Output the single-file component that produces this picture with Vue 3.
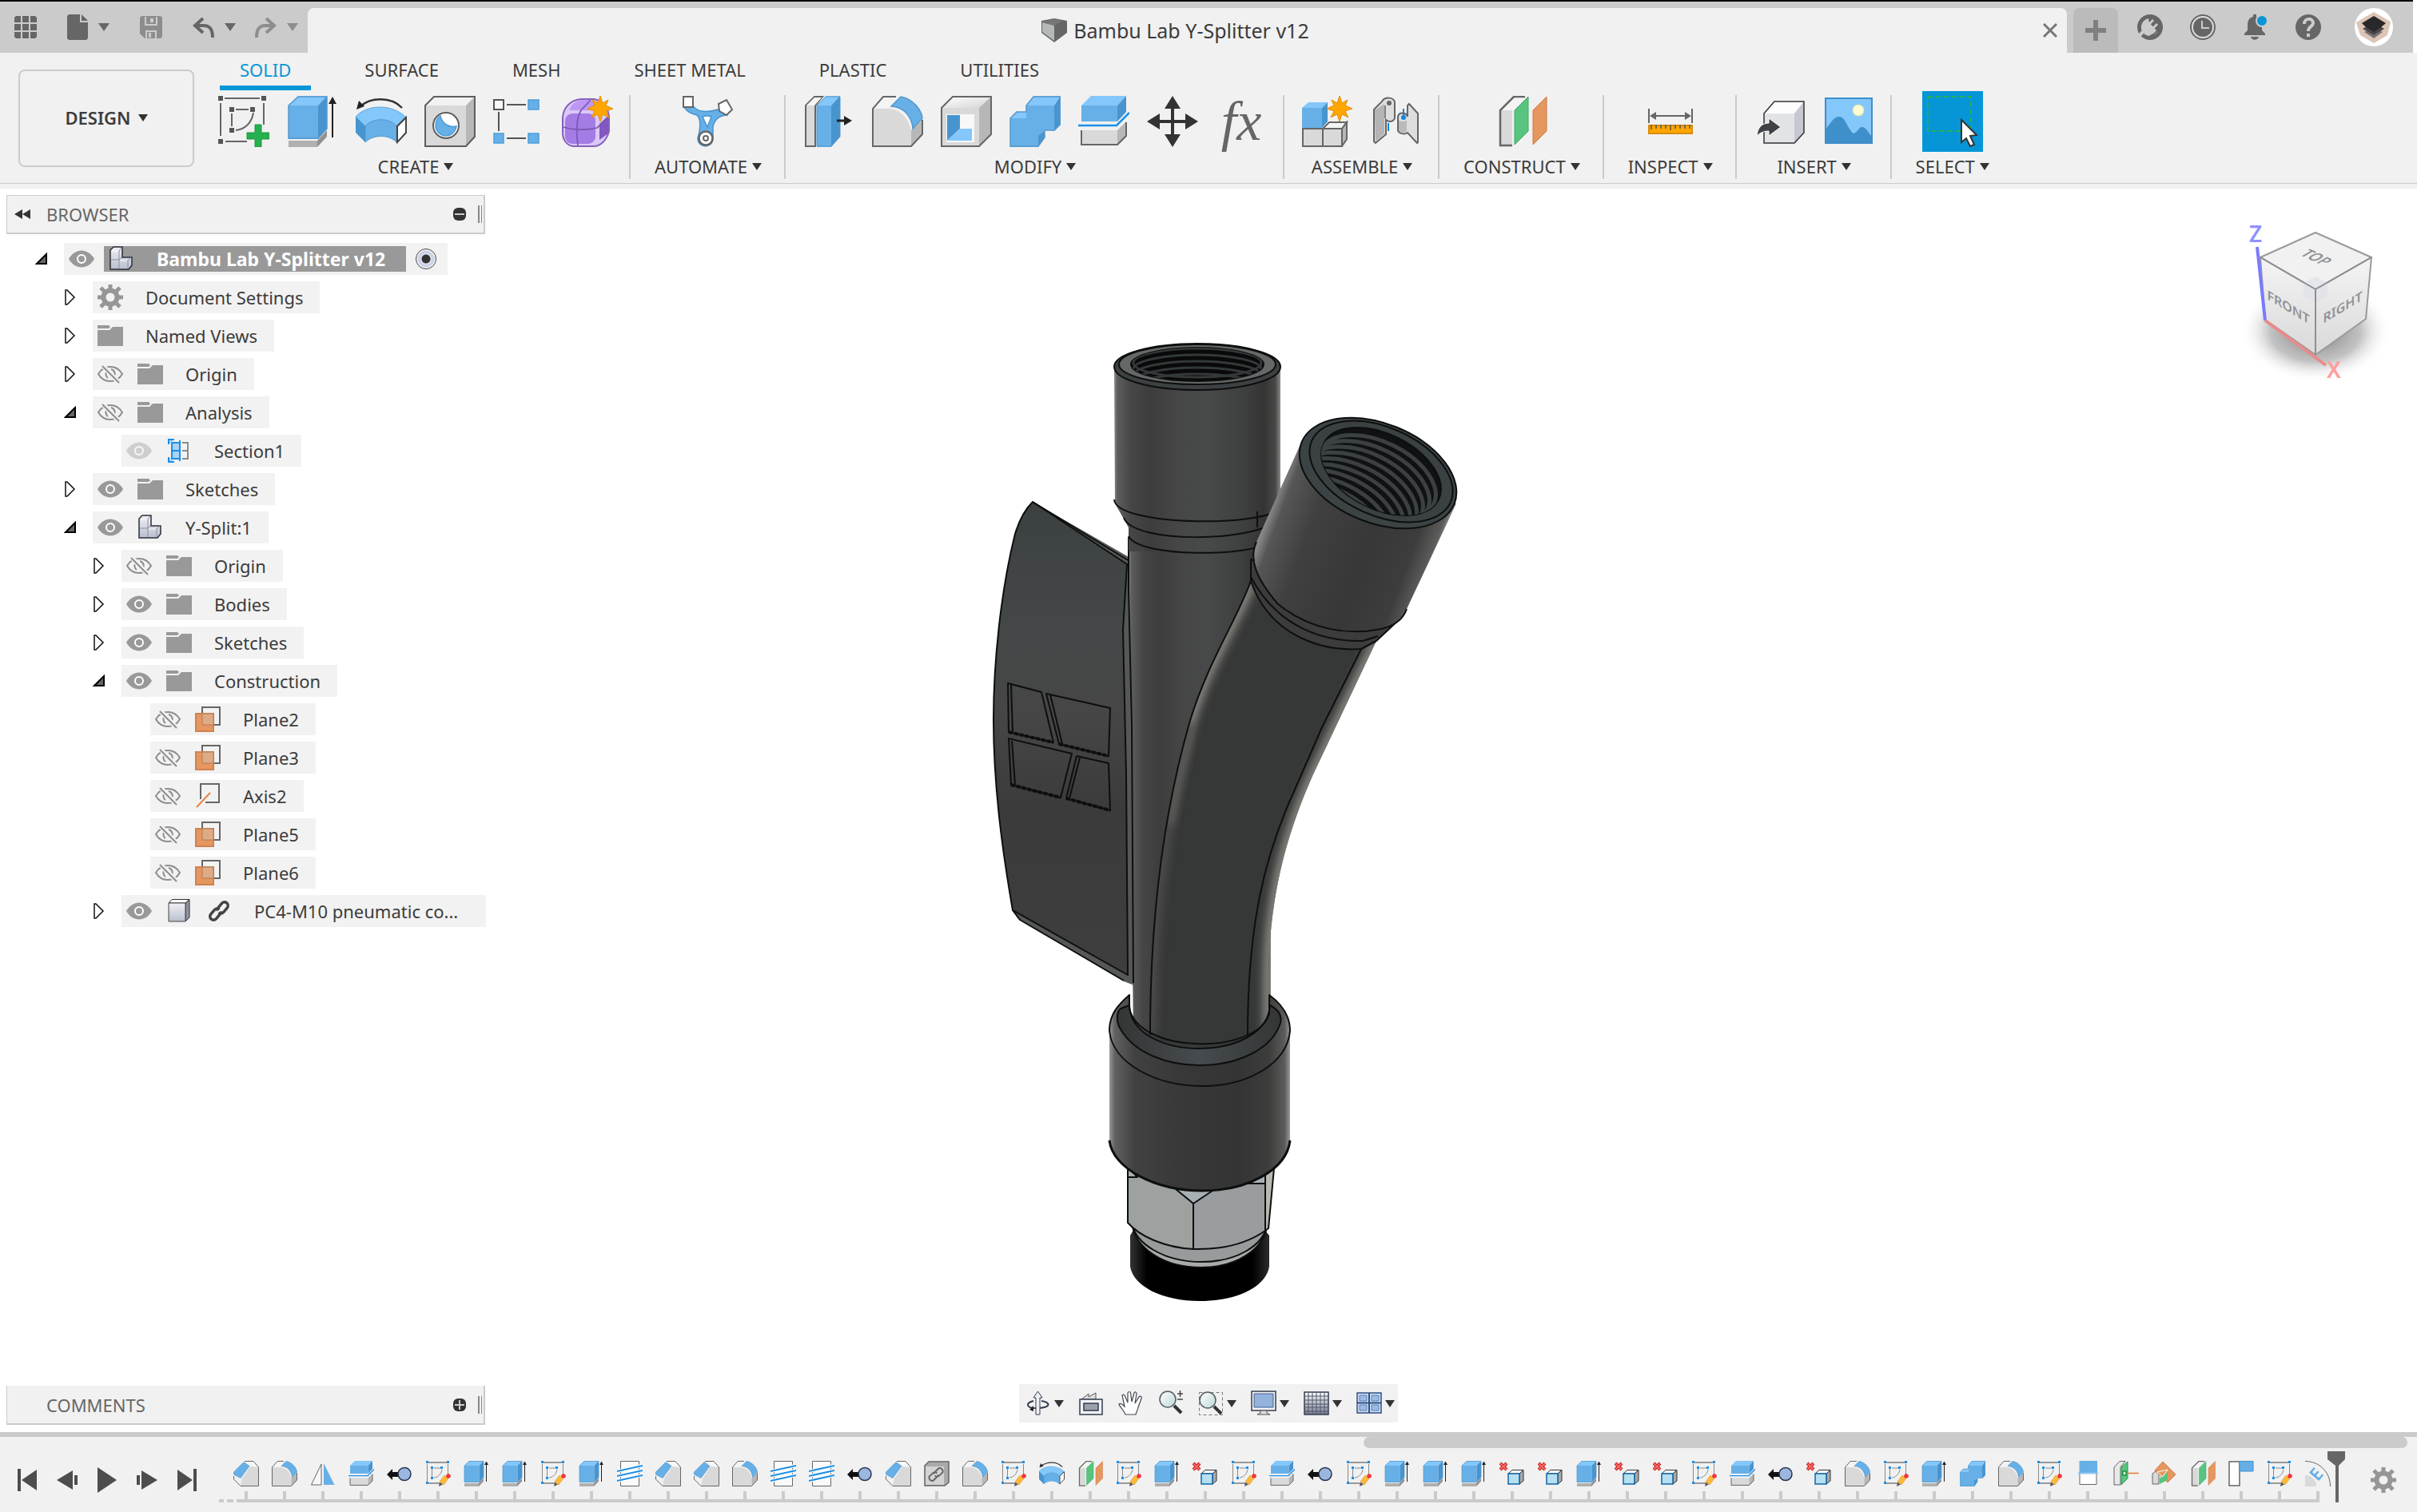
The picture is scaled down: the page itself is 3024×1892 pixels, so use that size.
<template>
  <!-- Shared icon shapes -->
  <svg class="sprite" aria-hidden="true">
    <defs>
      <linearGradient id="g-top" x1="0" y1="0" x2="1" y2="1">
        <stop offset="0" stop-color="#fff" /><stop offset="1" stop-color="#d4d4d4" />
      </linearGradient>
      <linearGradient id="g-metal" x1="0" y1="0" x2="0" y2="1">
        <stop offset="0" stop-color="#f0f1f5" /><stop offset="1" stop-color="#b9bfcf" />
      </linearGradient>
      <linearGradient id="g-lens" x1="0" y1="0" x2="1" y2="1">
        <stop offset="0" stop-color="#fff" /><stop offset="1" stop-color="#bcd9d6" />
      </linearGradient>
      <linearGradient id="g-fade" x1="0" y1="0" x2="0" y2="1">
        <stop offset="0" stop-color="#fff" /><stop offset="1" stop-color="#777c92" />
      </linearGradient>
    </defs>

    <symbol id="i-sketch" viewBox="0 0 64 64">
      <g fill="none" stroke="#666" stroke-width="2">
        <path d="M8 3H52M3 9V50M57 9V36M9 57H36M22 17H38M17 22V38M44 21C42 34 33 42 22 43" />
      </g>
      <path fill="#555" d="M0 0h6v6H0zM54 0h6v6h-6zM0 54h6v6H0zM14 14h6v6h-6zM40 14h6v6h-6zM14 40h6v6h-6z" />
      <path fill="#26b050" stroke="#1d9641" d="M46 36h8v10h10v8H54v10h-8V54H36v-8h10z" />
    </symbol>
    <symbol id="i-extrude" viewBox="0 0 64 64">
      <path fill="#b0b0b0" d="M2 56H38V64H2z" /><path fill="#949090" d="M38 56L50 43V51L38 64z" />
      <path fill="#67b0e7" d="M2 12H39V54H2z" /><path fill="#84c7fa" d="M2 12L14 0H50L39 12z" />
      <path fill="#4794cf" d="M39 12L50 0V41L39 54z" />
      <path fill="none" stroke="#5498cd" stroke-width="1.5" d="M2 12L14 1H50V41L39 53H2z" />
      <path stroke="#222" stroke-width="2" d="M57 8V52" /><path fill="#222" d="M57 1L62 10H52z" />
    </symbol>
    <symbol id="i-revolve" viewBox="0 0 64 64">
      <path fill="#84c7fa" stroke="#5ca6df" d="M0 26C14 10 46 10 62 26L51 38C44 29 20 29 12 38z" />
      <path fill="#67b0e7" stroke="#5498cd" d="M12 38C20 27 44 27 51 38V58C42 48 22 48 12 58z" />
      <path fill="#4794cf" d="M0 26L12 38V58L0 46z" />
      <path fill="#fff" stroke="#444" stroke-width="2" d="M52 38L63 27V46L52 58z" />
      <path fill="none" stroke="#333" stroke-width="2.5" d="M6 13C18 2 44 0 58 15" />
      <path fill="#222" d="M1 17L4 6L11 13z" />
    </symbol>
    <symbol id="i-hole" viewBox="0 0 64 64">
      <path fill="#d9d9d9" d="M1 12H52V63H1z" /><path fill="#f2f2f2" d="M1 12L12 1H63L52 12z" />
      <path fill="#b7b7b7" d="M52 12L63 1V51L52 63z" />
      <path fill="none" stroke="#5e5e5e" stroke-width="2" d="M1 12L12 1H63V51L52 63H1z" />
      <circle cx="27" cy="37" r="16" fill="#fff" stroke="#5e5e5e" stroke-width="2" />
      <path fill="#67b0e7" stroke="#4e9dd8" stroke-width="1.5" d="M20 25C22 35 31 40 40 38C39 45 33 50 27 50C20 50 14 44 14 37C14 31 17 27 20 25z" />
    </symbol>
    <symbol id="i-pattern" viewBox="0 0 64 64">
      <path stroke="#555" stroke-width="2" d="M17 11H41M7 20V44M17 53H41" />
      <path fill="#f8f8f8" stroke="#555" stroke-width="2" d="M1 5H13V17H1z" />
      <path fill="#67b0e7" stroke="#4e9dd8" stroke-width="1.5" d="M44 5H57V17H44zM44 47H57V59H44zM1 47H13V59H1z" />
    </symbol>
    <symbol id="i-form" viewBox="0 0 64 64">
      <path fill="#dcc8f7" stroke="#8661bd" stroke-width="2" d="M1 27C2 14 11 5 24 4H40C52 6 59 16 59 28V44C56 56 48 63 40 63H14C6 62 1 55 1 46z" />
      <path fill="#be97f5" d="M9 18C12 9 21 4 32 5L46 8L36 18z" />
      <rect x="4" y="22" width="38" height="38" rx="9" fill="#a47ce5" />
      <path fill="#8257c0" d="M47 35L58 25V47L47 55z" />
      <path fill="none" stroke="#7d57b4" stroke-width="1.8" d="M2 39C14 43 32 43 44 40L59 26M20 62C18 46 18 28 24 18L36 5" />
      <use href="#star" x="32" y="0" />
    </symbol>
    <symbol id="star" viewBox="0 0 32 32" width="32" height="32">
      <path fill="#ffa700" stroke="#e38e00" d="M16 0L19 9L26 5L23 12L32 16L23 19L27 27L19 23L16 32L13 23L5 27L9 19L0 16L9 12L6 5L13 9z" />
    </symbol>
    <symbol id="i-automate" viewBox="0 0 64 64">
      <path fill="#67b0e7" stroke="#4794cf" stroke-width="1.5" d="M2 14L13 12C17 19 28 22 44 17L55 24C46 25 41 28 38 38L38 54C37 66 19 66 19 53C22 42 24 30 18 24C11 22 5 20 2 14z" />
      <path fill="#fff" stroke="#4794cf" stroke-width="1.5" d="M25 26Q31 24 36 26L31 39z" />
      <path fill="#fff" stroke="#666" stroke-width="2" d="M1 1H13V14H1zM45 10L55 5L62 17L55 24L46 19z" />
      <circle cx="29" cy="53" r="8.500" fill="#fff" stroke="#666" stroke-width="2.500" />
      <circle cx="29" cy="53" r="3" fill="#fff" stroke="#666" stroke-width="2" />
    </symbol>
    <symbol id="i-press" viewBox="0 0 64 64">
      <path fill="#d9d9d9" stroke="#666" stroke-width="2" d="M15 63H3V12L14 1H24L15 12z" />
      <path fill="#f4f4f4" d="M4 12L14 2H23L14 12z" />
      <path fill="#67b0e7" d="M17 12H35V64H17z" /><path fill="#84c7fa" d="M17 12L28 0H46L35 12z" />
      <path fill="#4794cf" d="M35 12L46 0V51L35 64z" />
      <path fill="none" stroke="#5498cd" d="M17 12L28 1H46V51L35 63H17z" />
      <path stroke="#222" stroke-width="3" d="M42 31H54" /><path fill="#222" d="M51 25L61 31L51 37z" />
    </symbol>
    <symbol id="i-fillet" viewBox="0 0 64 64">
      <path fill="#f4f4f4" d="M1 16L14 1H34L24 14z" />
      <path fill="#d9d9d9" d="M1 16H22C38 18 48 32 49 46V63H1z" />
      <path fill="#b7b7b7" d="M49 43L63 30V48L49 63z" />
      <path fill="none" stroke="#666" stroke-width="2" d="M30 1H14L1 16V63H49L63 48V30" />
      <path fill="#67b0e7" stroke="#5498cd" stroke-width="1.5" d="M24 13L36 1C52 4 62 18 63 28L51 41C50 26 40 14 24 13z" />
    </symbol>
    <symbol id="i-shell" viewBox="0 0 64 64">
      <path fill="#d9d9d9" d="M1 15H48V63H1z" /><path fill="url(#g-top)" d="M1 15L15 1H63L48 15z" />
      <path fill="#b7b7b7" d="M48 15L63 1V48L48 63z" />
      <path fill="none" stroke="#666" stroke-width="2" d="M1 15L15 1H63V48L48 63H1z" />
      <path fill="#f8f8f8" d="M7 23H42V58H7z" /><path fill="#4794cf" d="M8 24H24V41L8 56z" />
      <path fill="#84c7fa" d="M8 56L24 41H39V56z" />
    </symbol>
    <symbol id="i-combine" viewBox="0 0 64 64">
      <path fill="#67b0e7" d="M1 28H21V12H56V43H43V51L36 64H1z" />
      <path fill="#84c7fa" d="M21 12L30 0H64L56 12zM1 28L9 20H21V28z" />
      <path fill="#4794cf" d="M56 12L64 0V36L56 44zM36 50L44 44V52L36 64z" />
      <path fill="none" stroke="#5498cd" stroke-width="1.5" d="M1 28L9 20H21V12L30 1H63V36L56 43H44V52L36 63H1z" />
    </symbol>
    <symbol id="i-split" viewBox="0 0 64 64">
      <path fill="#67b0e7" d="M4 12H49V32H4z" /><path fill="#84c7fa" d="M4 12L16 0H60L49 12z" />
      <path fill="#4794cf" d="M49 12L60 0V20L49 32z" />
      <path fill="none" stroke="#1a8fe8" stroke-width="2.5" d="M0 37H48L64 21" />
      <path fill="#d9d9d9" d="M4 43H49V61H4z" /><path fill="#b7b7b7" d="M49 43L60 32V50L49 61z" />
      <path fill="none" stroke="#666" stroke-width="2" d="M4 43V61H49L60 50V33" />
    </symbol>
    <symbol id="i-move" viewBox="0 0 64 64">
      <path stroke="#333" stroke-width="4" d="M32 10V54M10 32H54" />
      <path fill="#333" d="M32 0L42 16H22zM32 64L42 48H22zM0 32L16 22V42zM64 32L48 22V42z" />
    </symbol>
    <symbol id="i-component" viewBox="0 0 64 64">
      <path fill="#d9d9d9" stroke="#666" stroke-width="2" d="M1 41H26V63H1zM26 41H50V63H26z" />
      <path fill="#f4f4f4" stroke="#666" stroke-width="2" d="M26 41L34 33H56L50 41z" />
      <path fill="#b7b7b7" stroke="#666" stroke-width="2" d="M50 41L56 33V54L50 63z" />
      <path fill="#67b0e7" d="M0 15H25V40H0z" /><path fill="#84c7fa" d="M0 15L8 8H32L25 15z" />
      <path fill="#4794cf" d="M25 15L32 8V32L25 40z" />
      <use href="#star" x="31" y="0" />
    </symbol>
    <symbol id="i-joint" viewBox="0 0 64 64">
      <path fill="#dedede" stroke="#666" stroke-width="2" d="M4 17L14 7C17 1 29 1 30 8V28C28 33 22 33 19 30V48L6 59L4 57z" />
      <path fill="#b4b4b4" d="M5 18L17 10V47L6 57z" />
      <path fill="none" stroke="#666" stroke-width="1.500" d="M18 28V12" />
      <circle cx="23" cy="9" r="3" fill="#666" />
      <path fill="#dedede" stroke="#666" stroke-width="2" d="M58 59L46 46C42 49 35 47 34 43V26C35 20 44 20 46 26V12L48 10L59 22V58z" />
      <path fill="#bababa" d="M35 30C38 33 43 33 45 30V44C42 47 36 46 35 42z" />
      <path stroke="#0f87df" stroke-width="2" d="M22 34V44M41 16V28" /><circle cx="41" cy="27" r="3" fill="#0f87df" />
    </symbol>
    <symbol id="i-planes" viewBox="0 0 64 64">
      <path fill="#d9d9d9" d="M5 18H20V62H5z" /><path fill="#f4f4f4" d="M5 18L22 1H37L20 18z" />
      <path fill="none" stroke="#666" stroke-width="2.5" d="M36 1H22L5 18V62H20" />
      <path fill="#58c47e" stroke="#35ad62" d="M23 18L40 1V44L23 61z" />
      <path fill="#e6965f" stroke="#cf7b42" d="M46 18L63 1V44L46 61z" />
    </symbol>
    <symbol id="i-inspect" viewBox="0 0 64 64">
      <path stroke="#666" stroke-width="2" d="M5 16V34M59 16V34M10 25H54" />
      <path fill="#666" d="M6 25L14 20V30zM58 25L50 20V30z" />
      <path fill="#ffa700" stroke="#d98c00" stroke-width="2" d="M5 37H59V47H5z" />
      <path stroke="#555" stroke-width="1.500" d="M8 36v6M14 36v5M20 36v5M26 36v5M32 36v7M38 36v5M44 36v5M50 36v5M56 36v5" />
    </symbol>
    <symbol id="i-insert" viewBox="0 0 64 64">
      <path fill="#e2e3e7" d="M12 22H50V59H12z" /><path fill="#fdfdfd" d="M12 22L25 7H62L50 22z" />
      <path fill="#c6c8d1" d="M50 22L62 7V46L50 59z" />
      <path fill="none" stroke="#333" stroke-width="1.5" d="M12 22L25 7H62V46L50 59H12z" />
      <path fill="#3f4147" stroke="#fff" d="M3 50C4 40 9 34 18 34V28L33 39L18 50V44C12 44 7 46 3 50z" />
    </symbol>
    <symbol id="i-image" viewBox="0 0 64 64">
      <path fill="#84c7fa" stroke="#3f8fcb" stroke-width="2" d="M3 3H61V59H3z" />
      <circle cx="44" cy="18" r="7" fill="#fffbd0" stroke="#d6e5b5" />
      <path fill="#3f8fcb" d="M3 42C9 35 13 26 20 26C28 26 31 42 38 47C43 46 44 39 49 39C54 39 57 47 61 51V60H3z" />
    </symbol>
    <symbol id="i-select" viewBox="0 0 76 76">
      <rect x="7" y="7" width="54" height="43" fill="none" stroke="#26b050" stroke-width="2" stroke-dasharray="6 4" />
      <path fill="#fff" stroke="#333" stroke-width="2" d="M49 36V64L55 59L60 69L65 67L60 56L68 55z" />
    </symbol>

    <!-- Timeline only -->
    <symbol id="t-chamfer" viewBox="0 0 64 64">
      <path fill="#f7f7f7" d="M20 1H50L63 16L42 13L26 42z" /><path fill="#d9d9d9" d="M42 14L63 16V63H18L22 44z" />
      <path fill="none" stroke="#666" stroke-width="2" d="M28 1H50L63 16V63H18L1 46V38" />
      <path fill="#67b0e7" stroke="#5498cd" stroke-width="1.5" d="M26 3L40 13L18 43L1 34V28z" />
    </symbol>
    <symbol id="t-mirror" viewBox="0 0 64 64">
      <path fill="#f7f7f7" stroke="#666" stroke-width="2" d="M28 8V60H3z" /><path fill="#67b0e7" d="M34 6L61 60H34z" />
    </symbol>
    <symbol id="t-align" viewBox="0 0 32 32">
      <path fill="#111" d="M0 17L7 10V14H14V20H7V24z" /><circle cx="22" cy="16.500" r="8" fill="#9bb7df" stroke="#28324e" stroke-width="1.500" />
    </symbol>
    <symbol id="t-sketch" viewBox="0 0 32 32">
      <path fill="none" stroke="#999" stroke-width="2" d="M4 2H27M4 28H20" /><path fill="none" stroke="#888" d="M2.500 4V26M28.500 4V20M8.500 10V20M11 9H19M21 11C20 17 15 21 11 21" />
      <path fill="#1a8fe8" d="M1 0h3v3H1zM27 0h3v3h-3zM1 26h3v3H1zM7 7h3v3H7zM19 7h3v3h-3zM7 20h3v3H7z" />
      <path fill="#fbb93b" stroke="#d99a2a" stroke-width=".6" d="M18 26L24 18L29 22L23 30z" />
      <circle cx="29" cy="19" r="2.800" fill="#f0353b" /><path fill="#555" d="M18 27L22 29.500L17 32z" />
    </symbol>
    <symbol id="t-thread" viewBox="0 0 32 32">
      <path fill="#fafafa" stroke="#666" d="M4.500 .5H27.500V31.500H4.500z" />
      <path stroke="#fff" stroke-width="4" d="M1 13L31 6M1 19L31 12M1 25L31 18" />
      <path stroke="#1a8fe8" stroke-width="2" d="M0 13L32 6M0 19L32 12M0 25L32 18" />
    </symbol>
    <symbol id="t-link" viewBox="0 0 32 32">
      <path fill="#aaa" stroke="#666" stroke-width="1.500" d="M1 6L6 1H31V27L26 31H1z" /><path fill="#d4d4d4" d="M2 7H25V30H2z" />
      <g fill="none" stroke="#666" stroke-width="2" transform="rotate(-45 15 17)">
        <path d="M17 20H7A4 4 0 0 1 7 13H13A4 4 0 0 1 17 17M13 14H23A4 4 0 0 1 23 21H17A4 4 0 0 1 13 17" />
      </g>
    </symbol>
    <symbol id="t-delete" viewBox="0 0 32 32">
      <path fill="none" stroke="#b71c1c" stroke-width="4" d="M1 3L9 11M9 3L1 11" /><path fill="none" stroke="#ff6860" stroke-width="2" d="M1 3L9 11M9 3L1 11" />
      <path fill="#fff" stroke="#333" d="M11 16L16 11.500H30L25 16z" /><path fill="#aaa" stroke="#333" d="M25 16L30 11.500V25L25 29z" />
      <path fill="#b5e0f1" stroke="#1165a6" stroke-width="1.500" d="M11 16H25V29H11z" />
    </symbol>
    <symbol id="t-face" viewBox="0 0 32 32">
      <path fill="#fff" stroke="#666" d="M6 14H27V29.500H6z" /><path fill="#67b0e7" d="M5.500 0H28V15H5.500z" /><path stroke="#8fc5ef" stroke-width="2" d="M4 15.500H29" />
    </symbol>
    <symbol id="t-axis" viewBox="0 0 32 32">
      <path fill="#e8e8e8" stroke="#666" d="M1 8L8 .5H15L9 8V30H1z" /><path fill="#58c47e" stroke="#249b50" d="M10 8L18 1V22L10 30z" />
      <path stroke="#e07b39" stroke-width="1.500" d="M15 15.500H32" /><path fill="#d7ffe2" stroke="#159747" stroke-width="1.500" d="M12 13h4v5h-4z" />
    </symbol>
    <symbol id="t-diamond" viewBox="0 0 32 32">
      <path fill="#d9d9d9" stroke="#666" d="M1 16L9 10V29H1z" /><path fill="#e6965f" stroke="#cf7b42" d="M14 1L30 17L20 27L4 12z" />
      <path fill="#58c47e" d="M10 29V22L20 14V24z" /><path fill="none" stroke="#fff" d="M7 14L20 11L14 20z" />
    </symbol>
    <symbol id="t-flag" viewBox="0 0 32 32">
      <path fill="#fff" stroke="#666" stroke-width="1.500" d="M1 1H14V31H1z" /><path fill="#67b0e7" stroke="#3f8fcb" d="M14 .5H31V13H14z" />
    </symbol>

    <!-- Browser tree -->
    <symbol id="b-eye" viewBox="0 0 32 32">
      <path fill="#999" d="M0 16C8 2 24 2 32 16C24 30 8 30 0 16z" /><circle cx="16" cy="16" r="5" fill="#999" stroke="#fff" stroke-width="2" />
    </symbol>
    <symbol id="b-hidden" viewBox="0 0 32 32">
      <path fill="none" stroke="#8d8d8d" stroke-width="2" d="M1 16C8 4 24 4 31 16C24 28 8 28 1 16zM12 12A6 6 0 0 0 13 21M17 10A6 6 0 0 1 20 20M15 14A3 3 0 0 1 18 18" />
      <path stroke="#f2f2f2" stroke-width="6" d="M7 6L26 26" /><path stroke="#8d8d8d" stroke-width="2" d="M6 6L27 27" />
    </symbol>
    <symbol id="b-folder" viewBox="0 0 32 32">
      <path fill="#999" d="M0 3H14L16 5L14 7H0zM0 9H15L19 5H32V29H0z" />
    </symbol>
    <symbol id="b-gear" viewBox="0 0 32 32">
      <circle cx="16" cy="16" r="8.500" fill="none" stroke="#969696" stroke-width="6" />
      <path stroke="#969696" stroke-width="5" d="M16 0V6M16 26V32M0 16H6M26 16H32M4 4L9 9M23 23L28 28M28 4L23 9M4 28L9 23" />
    </symbol>
    <symbol id="b-component" viewBox="0 0 32 32">
      <path fill="url(#g-metal)" stroke="#2c2f38" stroke-width="1.500" d="M2 5L6 1H17V14H29V24L25 29H2z" />
      <path fill="none" stroke="#8b91a3" d="M13 6L16 2M13 6V28M3 17H13L16 14M24 18L28 14M24 18V28" />
      <path fill="none" stroke="#fff" d="M4 6H12M14 18H23" />
    </symbol>
    <symbol id="b-body" viewBox="0 0 32 32">
      <path fill="#fafafa" stroke="#333" d="M3 6L7 1.500H29L24 6z" /><path fill="#8e949f" stroke="#333" d="M24 6L29 1.500V24L24 29z" />
      <path fill="url(#g-metal)" stroke="#444" d="M3 6H24V29H3z" />
    </symbol>
    <symbol id="i-link" viewBox="0 0 32 32">
      <g fill="none" stroke="#444" stroke-width="4" transform="rotate(-50 16 16)">
        <path d="M18 20H5A5 5 0 0 1 5 10H13A5 5 0 0 1 18 15M14 12H27A5 5 0 0 1 27 22H19A5 5 0 0 1 14 17" />
      </g>
    </symbol>
    <symbol id="b-section" viewBox="0 0 32 32">
      <path fill="#a9d3f4" stroke="#1a8fe8" stroke-width="2" d="M7 6H17V26H7zM7 16H17M17 3V29M10 2H3V8M10 30H3V24" />
      <path fill="none" stroke="#8c8c8c" stroke-width="2" d="M20 6H27V26H20M20 16H27" />
    </symbol>
    <symbol id="b-plane" viewBox="0 0 32 32">
      <path fill="#f2f2f2" stroke="#666" stroke-width="2" d="M9 1H31V23H9z" />
      <path fill="#e6965f" stroke="#cf8350" stroke-width="2" d="M1 9H23V31H1z" /><path fill="#dfab86" stroke="#b37b55" d="M9 9H23V23H9z" />
    </symbol>
    <symbol id="b-axis" viewBox="0 0 32 32">
      <path fill="none" stroke="#666" stroke-width="2" d="M7 20V1H30V24H13" /><path stroke="#e8813c" stroke-width="2" d="M2 30L19 12" />
    </symbol>

    <!-- Navigation bar -->
    <symbol id="n-orbit" viewBox="0 0 32 32">
      <path fill="none" stroke="#333b4d" stroke-width="2" d="M10 13C-2 16 2 23 16 22C32 21 32 15 20 13" />
      <path fill="#eef0f4" stroke="#333b4d" d="M13 30V9H10L15.500 1L21 9H18V30z" /><path fill="#222" d="M5 24L10 19V26z" />
    </symbol>
    <symbol id="n-look" viewBox="0 0 32 32">
      <path fill="#ddd" stroke="#555" d="M4 11L13 4V8L22 3V11z" /><path fill="#f3f3f5" stroke="#333b4d" stroke-width="1.500" d="M2 11H30V30H2z" />
      <path fill="#9ba0ad" stroke="#333b4d" stroke-width="1.500" d="M7 16H25V25H7z" />
    </symbol>
    <symbol id="n-hand" viewBox="0 0 32 32">
      <path fill="#fff" stroke="#444a55" stroke-width="1.200" d="M9 30C7 24 2 21 1 17C3 15 6 18 8 20L5 6C7 4 8 6 9 8L12 15L12 3C13 1 15 1 15.500 3L17 14L20 3C21 1 23 2 23 4L21 16L26 8C28 6 30 8 29 10L25 21C24 26 22 28 22 30z" />
    </symbol>
    <symbol id="n-zoom" viewBox="0 0 32 32">
      <path stroke="#333" stroke-width="4" d="M20 19L29 28" /><circle cx="12" cy="11" r="10" fill="url(#g-lens)" stroke="#555b60" stroke-width="1.500" />
      <path stroke="#444" stroke-width="1.500" d="M24 4H31M27.500 0V8M24 11H31" />
    </symbol>
    <symbol id="n-fit" viewBox="0 0 32 32">
      <path fill="none" stroke="#777" stroke-dasharray="4 3" d="M1.500 2.500H30.500V30.500H1.500z" />
      <path stroke="#333" stroke-width="4" d="M20 20L29 29" /><circle cx="12" cy="12" r="10" fill="url(#g-lens)" stroke="#555b60" stroke-width="1.500" />
    </symbol>
    <symbol id="n-display" viewBox="0 0 32 32">
      <path fill="#f5f5f5" stroke="#333b4d" stroke-width="1.500" d="M1 1H31V25H1z" /><path fill="#93b3dd" stroke="#3f5f92" d="M4 4H28V21H4z" />
      <path fill="#ddd" stroke="#555" d="M12 25H20V28L24 30H8L12 28z" />
    </symbol>
    <symbol id="n-grid" viewBox="0 0 32 32">
      <path fill="url(#g-fade)" stroke="#333b4d" stroke-width="1.500" d="M1 2H31V30H1z" />
      <path stroke="#50586a" d="M6 2V30M11 2V30M16 2V30M21 2V30M26 2V30M1 7H31M1 12H31M1 17H31M1 21H31M1 26H31" />
    </symbol>
    <symbol id="n-tiles" viewBox="0 0 32 32">
      <path fill="#cfe0f4" stroke="#2f4f82" stroke-width="1.500" d="M1 3H31V28H1z" /><path stroke="#2f4f82" stroke-width="2" d="M16 3V28M1 15.500H31" />
      <path fill="#9dbbe3" stroke="#5b7fb5" d="M4 6H13V13H4zM19 6H28V13H19zM4 18H13V25H4zM19 18H28V25H19z" />
    </symbol>
  </svg>

  <div class="app">
    <header class="titlebar">
      <div class="quick">
        <button class="plain" aria-label="Data panel">
          <svg width="28" height="28" viewBox="0 0 28 28" fill="#666"><path d="M2 0h6v8H0V2zM10 0h8v8h-8zM20 0h6l2 2v6h-8zM0 10h8v8H0zM10 10h8v8h-8zM20 10h8v8h-8zM0 20h8v8H2l-2-2zM10 20h8v8h-8zM20 20h8v6l-2 2h-6z" /></svg>
        </button>
        <button class="plain menu" aria-label="File">
          <svg width="26" height="32" viewBox="0 0 26 32" fill="#666"><path d="M2 0H16V10H26V30L24 32H2L0 30V2zM18 0L26 8H18z" /></svg>
          <i class="caret wide" />
        </button>
        <button class="plain" aria-label="Save">
          <svg width="28" height="28" viewBox="0 0 28 28"><path fill="#8d8d8d" d="M2 0H26L28 2V26L26 28H6L0 22V2z" /><path fill="none" stroke="#ccc" stroke-width="2" d="M7 1V11H21V1M8 28V19H20V28" /><path fill="#ccc" d="M13 3h4v5h-4zM11 21h3v6h-3z" /></svg>
        </button>
        <div class="history">
          <button class="plain menu" aria-label="Undo">
            <svg width="27" height="26" viewBox="0 0 27 26" fill="none" stroke="#666" stroke-width="4"><path d="M13 2L3 11L13 20M4 11H14C22 11 25 16 25 26" /></svg>
            <i class="caret wide" />
          </button>
          <button class="plain menu faded" aria-label="Redo">
            <svg width="27" height="26" viewBox="0 0 27 26" fill="none" stroke="#8d8d8d" stroke-width="4"><path d="M14 2L24 11L14 20M23 11H13C5 11 2 16 2 26" /></svg>
            <i class="caret wide" />
          </button>
        </div>
      </div>
      <div class="doc-tab">
        <div class="doc-name">
          <svg width="32" height="30" viewBox="0 0 32 30"><path fill="#666" d="M0 3L16 0L32 3V18L16 30L0 18z" /><path fill="#b5b8b8" d="M1 5L16 9V28L1 17z" /><path fill="#777" d="M1 4L16 1L26 3L16 9z" /></svg>
          <span>Bambu Lab Y-Splitter v12</span>
        </div>
        <button class="plain" aria-label="Close tab">
          <svg width="18" height="18" viewBox="0 0 18 18" stroke="#777" stroke-width="3"><path d="M1 1L17 17M17 1L1 17" /></svg>
        </button>
      </div>
      <button class="plain new-tab" aria-label="New tab">
        <svg width="26" height="26" viewBox="0 0 26 26" fill="#808080"><path d="M10 0h6v10h10v6H16v10h-6V16H0v-6h10z" /></svg>
      </button>
      <div class="status">
        <button class="plain" aria-label="Extensions">
          <svg width="32" height="32" viewBox="0 0 32 32"><circle cx="16" cy="16" r="13.500" fill="none" stroke="#666" stroke-width="5" /><path fill="#666" d="M14 3H22L29 10V18L20 27H16z" /><path fill="#cbcbcb" d="M6 14L12 7L24 20C20 26 13 28 9 23L3 29L1 25L6 20C5 18 5 16 6 14z" /><path stroke="#cbcbcb" stroke-width="3" d="M15 12L20 7M20 17L25 12" /></svg>
        </button>
        <button class="plain" aria-label="Job status">
          <svg width="32" height="32" viewBox="0 0 32 32"><circle cx="16" cy="16" r="15" fill="#ddd" stroke="#666" stroke-width="2" /><circle cx="16" cy="16" r="12" fill="#666" /><path fill="none" stroke="#ccc" stroke-width="2" d="M15 8V17H24" /></svg>
        </button>
        <button class="plain" aria-label="Notifications">
          <svg width="32" height="32" viewBox="0 0 32 32"><path fill="#666" d="M13 0h4v3C22 4 24 8 24 13V20L28 24V26H2V24L6 20V13C6 8 8 4 13 3zM10 28H20C19 33 11 33 10 28z" /><circle cx="24" cy="8" r="7" fill="#0696d7" stroke="#ccc" stroke-width="2" /></svg>
        </button>
        <button class="plain" aria-label="Help">
          <svg width="32" height="32" viewBox="0 0 32 32"><circle cx="16" cy="16" r="16" fill="#666" /><path fill="none" stroke="#ccc" stroke-width="4" d="M11 12C11 4 22 4 22 11C22 15 16 15 16 21" /><path fill="#ccc" d="M14 24h4v4h-4z" /></svg>
        </button>
      </div>
      <button class="plain avatar" aria-label="Account">
        <svg width="48" height="48" viewBox="0 0 48 48"><circle cx="24" cy="24" r="24" fill="#fff" /><path fill="#dcc5b6" d="M24 5L45 17L41 34L24 44L7 34L2 18z" /><path fill="#777175" d="M12 30L24 24L35 30L24 38z" /><path fill="#4a4648" d="M10 26L24 18L37 26L24 34z" /><path fill="#29282a" d="M9 19L24 10L39 19L33 24L24 30L14 24z" /></svg>
      </button>
    </header>

    <section class="ribbon">
      <button class="workspace">DESIGN <i class="caret" /></button>
      <div class="ribbon-main">
        <nav class="tabs">
          <button v-for="tab in tabs" :key="tab" class="tab" :class="{ active: tab === activeTab }" @click="activeTab = tab">{{ tab }}</button>
        </nav>
        <div class="groups">
          <div v-for="g in groups" :key="g.label" class="group">
            <div class="tools">
              <button v-for="t in g.tools" :key="t" class="tool" :class="{ on: t === 'select' }" :aria-label="t">
                <span v-if="t === 'fx'" class="fx">fx</span>
                <svg v-else><use :href="'#i-' + t" /></svg>
              </button>
            </div>
            <button class="group-label">{{ g.label }} <i class="caret" /></button>
          </div>
        </div>
      </div>
    </section>

    <main class="canvas">
      <!-- 3D model, hex fitting and view cube -->
      <svg class="scene" viewBox="0 236 3024 1556" preserveAspectRatio="xMidYMid meet">
        <defs>
          <linearGradient id="m-tube" x1="0" x2="1">
            <stop offset="0" stop-color="#8b8b88" /><stop offset=".02" stop-color="#5c5d5c" /><stop offset=".1" stop-color="#454645" />
            <stop offset=".22" stop-color="#3c3d3c" /><stop offset=".38" stop-color="#454645" /><stop offset=".55" stop-color="#484a4a" />
            <stop offset=".78" stop-color="#3e3f3f" /><stop offset=".9" stop-color="#333433" /><stop offset=".97" stop-color="#484847" /><stop offset="1" stop-color="#8b8b88" />
          </linearGradient>
          <linearGradient id="m-collar" x1="0" x2="1">
            <stop offset="0" stop-color="#9b9995" /><stop offset=".03" stop-color="#626161" /><stop offset=".14" stop-color="#414141" /><stop offset=".4" stop-color="#373837" />
            <stop offset=".7" stop-color="#333433" /><stop offset=".88" stop-color="#3c3c3b" /><stop offset=".97" stop-color="#5c5b5b" /><stop offset="1" stop-color="#9b9995" />
          </linearGradient>
          <linearGradient id="m-head" gradientUnits="userSpaceOnUse" x1="1594" y1="628" x2="1796" y2="704">
            <stop offset="0" stop-color="#868686" /><stop offset=".06" stop-color="#555655" /><stop offset=".25" stop-color="#3f403f" /><stop offset=".6" stop-color="#363736" />
            <stop offset=".85" stop-color="#3e3d3d" /><stop offset=".96" stop-color="#5d5c5b" /><stop offset="1" stop-color="#9b9995" />
          </linearGradient>
          <linearGradient id="m-fin" x1="0" y1="0" x2="0" y2="1">
            <stop offset="0" stop-color="#3b4041" /><stop offset=".25" stop-color="#444748" /><stop offset=".45" stop-color="#464646" /><stop offset=".65" stop-color="#3a3b3a" /><stop offset="1" stop-color="#3d3e3d" />
          </linearGradient>
          <linearGradient id="m-ring" x1="0" x2="1"><stop offset="0" stop-color="#343635" /><stop offset=".5" stop-color="#464b4f" /><stop offset="1" stop-color="#343635" /></linearGradient>
          <linearGradient id="m-black" x1="0" x2="1"><stop offset="0" stop-color="#333" /><stop offset=".12" stop-color="#000" /><stop offset=".88" stop-color="#000" /><stop offset="1" stop-color="#2c2c2c" /></linearGradient>
          <linearGradient id="c-side" x1="0" y1="0" x2="0" y2="1"><stop offset="0" stop-color="#f4f4f4" /><stop offset="1" stop-color="#d9d9d9" /></linearGradient>
          <radialGradient id="c-shadow"><stop offset="0" stop-color="#777" /><stop offset=".6" stop-color="#999" stop-opacity=".6" /><stop offset="1" stop-color="#fff" stop-opacity="0" /></radialGradient>
          <clipPath id="bore-a"><ellipse cx="1498" cy="456" rx="83" ry="21" /></clipPath>
          <clipPath id="bore-b"><ellipse cx="1728" cy="590" rx="80" ry="47" transform="rotate(26 1728 590)" /></clipPath>
          <filter id="soft"><feGaussianBlur stdDeviation="6" /></filter>
          <clipPath id="branch-clip"><path :d="branch" /></clipPath>
        </defs>

        <g stroke="#0d0e0e" stroke-width="2" stroke-linejoin="round">
          <!-- fin -->
          <path fill="#555856" stroke="none" d="M1292 628L1414 698L1422 1234L1406 1228L1276 1151L1267 1139z" />
          <path fill="url(#m-fin)" d="M1292 628C1284 636 1276 648 1270 668C1252 740 1243 830 1243 900C1243 990 1256 1075 1267 1139L1411 1220L1409 971L1405 788L1410 706z" />
          <path fill="none" d="M1267 1139L1276 1151L1406 1227M1292 628L1413 702" />
          <g fill="none">
            <path d="M1261 855L1303 866L1318 929L1262 916zM1265 857L1267 916M1309 868L1389 886L1387 946L1325 931zM1314 869L1329 931M1262 924L1341 943L1327 998L1265 982zM1266 927L1270 982M1347 946L1387 955L1389 1014L1334 999zM1351 948L1338 999" />
            <path stroke-width="4" stroke-dasharray="5 2" d="M1262 916L1318 929M1325 931L1387 946M1265 982L1327 998M1334 999L1389 1014" />
          </g>

          <!-- black release ring and nut -->
          <path fill="url(#m-black)" stroke="none" d="M1414 1546V1585C1418 1610 1455 1628 1501 1628C1548 1628 1584 1610 1588 1585V1546L1580 1536H1420z" />
          <path fill="#a9aba9" d="M1416 1530C1420 1562 1456 1586 1503 1586C1545 1586 1582 1565 1586 1530z" />
          <path fill="#979b9c" d="M1416 1530C1420 1556 1456 1579 1503 1579C1545 1579 1582 1560 1586 1530z" />
          <path fill="#b9b8b1" d="M1583 1450L1594 1462L1589 1516L1587 1537L1583 1540z" />
          <path fill="#9da1a0" d="M1411 1440H1493V1563C1455 1561 1425 1546 1411 1530z" />
          <path fill="#999d9f" d="M1493 1440H1583V1540C1560 1556 1530 1564 1493 1563z" />
          <path fill="#a9b0b5" d="M1471 1488L1493 1506L1517 1490zM1411 1460V1473H1423zM1560 1481H1583V1462z" />

          <!-- straight tube -->
          <path fill="url(#m-tube)" stroke="none" d="M1412 655H1590V1300H1418L1417 1200z" />
          <path fill="none" d="M1412 672V735L1416 910L1418 1230" />
          <path fill="url(#m-tube)" stroke="none" d="M1394 462H1602V632C1598 640 1590 650 1584 658V690H1412V660L1395 630z" />
          <path fill="none" d="M1394 625C1396 660 1598 660 1602 633M1406 648C1418 680 1565 679 1596 652M1412 671C1425 698 1565 697 1590 678M1573 640V660" />
          <ellipse cx="1498" cy="459" rx="104" ry="29" fill="#3c4243" />
          <ellipse cx="1498" cy="456" rx="98" ry="25" fill="#656866" />
          <ellipse cx="1498" cy="456" rx="83" ry="21" fill="#090909" />
          <g clip-path="url(#bore-a)" fill="none" stroke="#33383a" stroke-width="3">
            <ellipse v-for="n in 5" :key="n" cx="1498" :cy="446 + n * 8" rx="80" ry="18" />
          </g>

          <!-- curved branch -->
          <path :d="branch" fill="#363837" stroke="none" />
          <g clip-path="url(#branch-clip)">
            <path fill="none" stroke="#93918b" stroke-width="12" filter="url(#soft)" d="M1566 727C1548 775 1510 830 1488 905C1475 950 1466 990 1459 1030M1722 802L1642 971C1612 1040 1590 1110 1587 1215V1310" />
            <path fill="none" stroke="#4d4d4c" stroke-width="14" filter="url(#soft)" d="M1490 905C1458 1010 1439 1140 1439 1295" />
          </g>
          <path fill="none" d="M1565 727C1548 775 1510 830 1488 905C1458 1010 1439 1140 1439 1295M1705 808L1654 910L1612 1006C1585 1070 1561 1150 1561 1295" />
          <path fill="#3b3c3b" d="M1565 700V727C1590 800 1660 815 1703 812L1722 802L1754 772z" />
          <path fill="none" d="M1565 722C1600 788 1660 803 1705 802L1724 796" />
          <path fill="url(#m-head)" stroke="none" d="M1627 556L1572 678C1562 700 1572 722 1598 755C1640 790 1690 795 1728 787C1745 783 1756 774 1760 762L1822 630z" />
          <path fill="none" d="M1572 678C1562 700 1572 724 1598 755C1640 790 1690 795 1728 787C1745 783 1756 774 1760 762" />
          <ellipse cx="1724" cy="592" rx="103" ry="62" transform="rotate(22 1724 592)" fill="#3c4345" />
          <ellipse cx="1728" cy="590" rx="95" ry="55" transform="rotate(24 1728 590)" fill="#3b4143" />
          <ellipse cx="1728" cy="590" rx="80" ry="47" transform="rotate(26 1728 590)" fill="#101112" />
          <g clip-path="url(#bore-b)" fill="none" stroke="#3b4042" stroke-width="5">
            <ellipse v-for="n in 12" :key="n" :cx="1731 - n * 4" :cy="588 + n * 10" rx="78" ry="44" transform="rotate(26 1728 590)" />
          </g>

          <!-- base collar -->
          <path fill="url(#m-collar)" stroke="none" d="M1413 1245C1398 1258 1388 1270 1388 1290V1427C1392 1462 1445 1490 1505 1490C1560 1490 1610 1464 1614 1427V1290C1614 1270 1603 1256 1588 1245V1262C1582 1328 1420 1328 1413 1262z" />
          <path fill="url(#m-ring)" d="M1402 1262C1396 1268 1397 1280 1402 1288C1420 1318 1460 1333 1501 1333C1550 1333 1592 1312 1602 1280C1604 1270 1600 1264 1589 1258C1584 1330 1416 1330 1413 1258z" />
          <path fill="none" d="M1413 1245C1398 1258 1388 1270 1388 1290C1392 1330 1445 1359 1505 1359C1560 1359 1610 1332 1614 1290C1614 1270 1603 1256 1588 1245V1268C1574 1320 1426 1320 1413 1262z" />
          <path fill="none" stroke-width="3" d="M1388 1427C1392 1462 1445 1490 1505 1490C1560 1490 1610 1464 1614 1427" />
        </g>

        <!-- view cube -->
        <g stroke-linejoin="round">
          <ellipse cx="2897" cy="414" rx="94" ry="64" fill="url(#c-shadow)" />
          <g stroke="#9a9a9a" stroke-width="2">
            <path fill="#f1f1f1" d="M2897 291L2967 322L2897 362L2828 322z" />
            <path fill="url(#c-side)" d="M2828 322L2897 362V444L2834 400zM2967 322L2897 362V444L2960 399z" />
          </g>
          <path fill="#dfe1e8" opacity=".7" d="M2897 346L2912 354V371L2897 379L2882 371V354z" />
          <path fill="none" stroke="#8f8f8f" stroke-width="2" d="M2828 322L2897 362L2967 322M2897 362V444" />
          <path stroke="#7b7bff" stroke-width="4" d="M2824 309L2834 401" /><path stroke="#eb8a8a" stroke-width="4" d="M2834 401L2910 457" />
          <g class="cube-text" text-anchor="middle">
            <text x="0" y="6" font-size="16" transform="translate(2863 384) skewY(31)">FRONT</text>
            <text x="0" y="6" font-size="16" transform="translate(2931 384) skewY(-31)">RIGHT</text>
            <text x="0" y="6" font-size="17" transform="translate(2898 322) rotate(25) skewX(-35)">TOP</text>
            <text class="axis-z" x="2822" y="303" font-size="28">Z</text>
            <text class="axis-x" x="2920" y="473" font-size="28">X</text>
          </g>
        </g>
      </svg>

      <aside class="browser">
        <div class="panel-head">
          <svg width="20" height="12" viewBox="0 0 20 12" fill="#333"><path d="M0 6L10 0V12zM10 6L20 0V12z" /></svg>
          <span class="panel-title">BROWSER</span>
          <button class="plain" aria-label="Collapse browser"><svg width="16" height="16" viewBox="0 0 16 16"><rect width="16" height="16" rx="6" fill="#333" /><path stroke="#ccc" stroke-width="2" d="M2 8H14" /></svg></button>
          <i class="grip" />
        </div>
        <ul class="tree">
          <li v-for="(n, i) in nodes" :key="i" class="node" :style="{ paddingLeft: n.level * 36 + 36 + 'px' }">
            <button class="plain twisty" aria-label="Toggle">
              <svg v-if="n.arrow === 'open'" width="16" height="16" viewBox="0 0 16 16"><path fill="#666" stroke="#000" stroke-width="2" d="M2 14L14 2V14z" /></svg>
              <svg v-else-if="n.arrow" width="16" height="20" viewBox="0 0 16 20"><path fill="#fff" stroke="#111" stroke-width="1.500" d="M2 1H4L13 10L4 19H2z" /></svg>
            </button>
            <div class="chip" :class="{ root: n.root, long: n.long }">
              <svg v-if="n.eye" class="ico" :class="{ dim: n.dim }"><use :href="'#b-' + n.eye" /></svg>
              <div class="chip-body">
                <svg class="ico"><use :href="'#b-' + n.icon" /></svg>
                <svg v-if="n.long" class="ico"><use href="#i-link" x="2" y="2" width="28" height="28" /></svg>
                <span class="name">{{ n.name }}</span>
              </div>
              <label v-if="n.root" class="activate"><input type="radio" checked aria-label="Activate component" /></label>
            </div>
          </li>
        </ul>
      </aside>

      <div class="bottom">
        <div class="panel-head comments">
          <span class="panel-title">COMMENTS</span>
          <button class="plain" aria-label="Add comment"><svg width="16" height="16" viewBox="0 0 16 16"><rect width="16" height="16" rx="6" fill="#333" /><path stroke="#ccc" stroke-width="2" d="M2 8H14M8 2V14" /></svg></button>
          <i class="grip" />
        </div>
        <div class="navbar">
          <button v-for="b in navTools" :key="b.id" class="plain nav" :aria-label="b.id">
            <svg class="ico"><use :href="'#n-' + b.id" /></svg><i v-if="b.menu" class="caret" />
          </button>
        </div>
      </div>
    </main>

    <footer class="timeline">
      <div class="scroll"><i /></div>
      <div class="track">
        <div class="player">
          <button class="plain" aria-label="Go to start"><svg width="24" height="32" viewBox="0 0 24 32"><path d="M0 2h4v28H0zM24 3V29L5 16z" /></svg></button>
          <button class="plain" aria-label="Step back"><svg width="26" height="32" viewBox="0 0 26 32"><path d="M20 4V28L0 16zM22 10h4v12h-4z" /></svg></button>
          <button class="plain" aria-label="Play"><svg width="24" height="32" viewBox="0 0 24 32"><path d="M0 0L24 16L0 32z" /></svg></button>
          <button class="plain" aria-label="Step forward"><svg width="26" height="32" viewBox="0 0 26 32"><path d="M6 4V28L26 16zM0 10h4v12H0z" /></svg></button>
          <button class="plain" aria-label="Go to end"><svg width="24" height="32" viewBox="0 0 24 32"><path d="M20 2h4v28h-4zM0 3V29L19 16z" /></svg></button>
        </div>
        <ol class="features">
          <li v-for="(f, i) in features" :key="i">
            <svg v-if="f === 'emboss'" class="ico emboss" viewBox="0 0 32 32">
              <path fill="none" stroke="#666" stroke-width="1" d="M0 .5C18 .5 31.500 14 31.500 32" /><path fill="#d9d9d9" d="M0 18C8 18 14 24 14 32H0z" />
              <text x="-7" y="8" transform="translate(14 16) rotate(-50)">E</text>
            </svg>
            <svg v-else class="ico"><use :href="'#' + f" /></svg>
          </li>
        </ol>
        <svg class="marker" width="22" height="64" viewBox="0 0 22 64" fill="#666"><path d="M0 0H22V10L14 18V64H10V18L0 10z" /></svg>
        <button class="plain settings" aria-label="Timeline settings"><svg class="ico"><use href="#b-gear" /></svg></button>
      </div>
    </footer>
  </div>
</template>

<script setup>
import { ref } from 'vue'

const tabs = ['SOLID', 'SURFACE', 'MESH', 'SHEET METAL', 'PLASTIC', 'UTILITIES']
const activeTab = ref('SOLID')

const groups = [
  { label: 'CREATE', tools: ['sketch', 'extrude', 'revolve', 'hole', 'pattern', 'form'] },
  { label: 'AUTOMATE', tools: ['automate'] },
  { label: 'MODIFY', tools: ['press', 'fillet', 'shell', 'combine', 'split', 'move', 'fx'] },
  { label: 'ASSEMBLE', tools: ['component', 'joint'] },
  { label: 'CONSTRUCT', tools: ['planes'] },
  { label: 'INSPECT', tools: ['inspect'] },
  { label: 'INSERT', tools: ['insert', 'image'] },
  { label: 'SELECT', tools: ['select'] },
]

const nodes = [
  { name: 'Bambu Lab Y-Splitter v12', level: 0, arrow: 'open', eye: 'eye', icon: 'component', root: true },
  { name: 'Document Settings', level: 1, arrow: 'closed', icon: 'gear' },
  { name: 'Named Views', level: 1, arrow: 'closed', icon: 'folder' },
  { name: 'Origin', level: 1, arrow: 'closed', eye: 'hidden', icon: 'folder' },
  { name: 'Analysis', level: 1, arrow: 'open', eye: 'hidden', icon: 'folder' },
  { name: 'Section1', level: 2, eye: 'eye', dim: true, icon: 'section' },
  { name: 'Sketches', level: 1, arrow: 'closed', eye: 'eye', icon: 'folder' },
  { name: 'Y-Split:1', level: 1, arrow: 'open', eye: 'eye', icon: 'component' },
  { name: 'Origin', level: 2, arrow: 'closed', eye: 'hidden', icon: 'folder' },
  { name: 'Bodies', level: 2, arrow: 'closed', eye: 'eye', icon: 'folder' },
  { name: 'Sketches', level: 2, arrow: 'closed', eye: 'eye', icon: 'folder' },
  { name: 'Construction', level: 2, arrow: 'open', eye: 'eye', icon: 'folder' },
  { name: 'Plane2', level: 3, eye: 'hidden', icon: 'plane' },
  { name: 'Plane3', level: 3, eye: 'hidden', icon: 'plane' },
  { name: 'Axis2', level: 3, eye: 'hidden', icon: 'axis' },
  { name: 'Plane5', level: 3, eye: 'hidden', icon: 'plane' },
  { name: 'Plane6', level: 3, eye: 'hidden', icon: 'plane' },
  { name: 'PC4-M10 pneumatic co...', level: 2, arrow: 'closed', eye: 'eye', icon: 'body', long: true },
]

const navTools = [
  { id: 'orbit', menu: true },
  { id: 'look' },
  { id: 'hand' },
  { id: 'zoom' },
  { id: 'fit', menu: true },
  { id: 'display', menu: true },
  { id: 'grid', menu: true },
  { id: 'tiles', menu: true },
]

// one letter per timeline feature
const kinds = {
  c: 't-chamfer', f: 'i-fillet', m: 't-mirror', s: 'i-split', a: 't-align', k: 't-sketch',
  e: 'i-extrude', t: 't-thread', l: 't-link', r: 'i-revolve', p: 'i-planes', d: 't-delete',
  b: 'i-combine', h: 't-face', x: 't-axis', o: 't-diamond', g: 't-flag', w: 'emboss',
}
const features = [...'cfmsakeeketccfttaclfkrpkedksakeeeddeddksadfkebfkhxopgkw'].map((c) => kinds[c])

const branch =
  'M1565 727C1548 775 1510 830 1488 905C1458 1010 1439 1140 1439 1320H1587V1215C1590 1110 1612 1040 1642 971L1722 802z'
</script>

<style>
body {
  margin: 0;
  background: #fff;
}
</style>

<style scoped>
.app {
  display: flex;
  flex-direction: column;
  min-height: 100vh;
  font-family: "Noto Sans", "Open Sans", sans-serif;
  font-size: 22px;
  line-height: 32px;
  color: #3c3c3c;
}

.sprite {
  position: absolute;
  width: 0;
  height: 0;
}

button {
  font: inherit;
  color: inherit;
}

svg {
  display: block;
}

.plain {
  display: flex;
  align-items: center;
  padding: 0;
  border: 0;
  background: none;
}

.ico {
  width: 32px;
  height: 32px;
  flex: none;
}

.caret {
  flex: none;
  border: 6px solid transparent;
  border-top: 9px solid #333;
  border-bottom: 0;
}

.caret.wide {
  border-width: 10px 7px 0;
  border-top-color: #666;
}

/* Title bar */
.titlebar {
  display: flex;
  align-items: stretch;
  height: 64px;
  border-top: 2px solid #000;
  margin-right: 5px;
  background: #cbcbcb;
}

.quick {
  display: flex;
  align-items: center;
  gap: 38px;
  padding: 0 12px 0 18px;
}

.history {
  display: flex;
  gap: 24px;
}

.menu {
  gap: 13px;
}

.faded .caret {
  border-top-color: #8d8d8d;
}

.doc-tab {
  flex: 1;
  display: flex;
  align-items: center;
  margin-top: 8px;
  padding-right: 12px;
  border-radius: 8px 8px 0 0;
  background: #f1f1f1;
}

.doc-name {
  flex: 1;
  display: flex;
  align-items: center;
  justify-content: center;
  gap: 8px;
  font-size: 25px;
}

.new-tab {
  justify-content: center;
  width: 56px;
  margin: 8px 24px 0 8px;
  border-radius: 8px 8px 0 0;
  background: #bbb;
}

.status {
  display: flex;
  align-items: center;
  gap: 34px;
}

.avatar {
  margin: 0 25px 0 42px;
}

/* Ribbon */
.ribbon {
  display: flex;
  padding-bottom: 5px;
  border-bottom: 1px solid #cbcbcb;
  box-shadow: 0 6px 0 #f1f1f1;
  background: #f1f1f1;
  margin-bottom: 6px;
}

.workspace {
  display: flex;
  align-items: center;
  justify-content: center;
  gap: 9px;
  width: 220px;
  height: 122px;
  margin: 21px 0 0 23px;
  padding: 0 6px 2px;
  border: 2px solid #cbcbcb;
  border-radius: 8px;
  background: none;
  font-weight: 600;
}

.ribbon-main {
  flex: 1;
}

.tabs {
  display: flex;
  gap: 42px;
  padding-left: 32px;
}

.tab {
  height: 47px;
  padding: 0 25px;
  border: 0;
  border-bottom: 6px solid transparent;
  background: none;
}

.tab.active {
  color: #0696d7;
  border-bottom-color: #0696d7;
}

.groups {
  display: flex;
  padding-left: 6px;
  margin-top: 6px;
}

.group {
  display: flex;
  flex-direction: column;
  align-items: center;
  padding: 0 20px 0 22px;
  border-right: 2px solid #cbcbcb;
}

.group:first-child {
  padding-left: 24px;
}

.group:last-child {
  border: 0;
}

.tools {
  display: flex;
  gap: 22px;
  height: 64px;
  align-items: center;
  margin-top: 1px;
}

.tool {
  width: 64px;
  height: 64px;
  padding: 0;
  border: 0;
  background: none;
}

.tool svg {
  width: 100%;
  height: 100%;
}

.tool.on {
  width: 76px;
  height: 76px;
  background: #0696d7;
}

.fx {
  display: block;
  font-family: "Liberation Serif", serif;
  font-size: 70px;
  font-style: italic;
  line-height: 60px;
  color: #666;
}

.group-label {
  display: flex;
  align-items: center;
  gap: 6px;
  padding: 0 8px;
  margin-top: 8px;
  border: 0;
  background: none;
}

/* Canvas */
.canvas {
  position: relative;
  flex: 1;
  display: flex;
  flex-direction: column;
  justify-content: space-between;
}

.scene {
  position: absolute;
  inset: 0;
  width: 100%;
  height: 100%;
}

.cube-text {
  font-family: "Noto Sans", sans-serif;
  fill: #8f9296;
  font-weight: 600;
}

.axis-z {
  fill: #9191ff;
}

.axis-x {
  fill: #ff9d9d;
}

.browser {
  position: relative;
  width: 608px;
  padding-top: 8px;
}

.panel-head {
  display: flex;
  align-items: center;
  box-sizing: border-box;
  width: 599px;
  height: 49px;
  margin-left: 8px;
  padding-left: 9px;
  border: 1px solid #cbcbcb;
  border-right-width: 2px;
  border-bottom-width: 2px;
  background: #f1f1f1;
}

.panel-title {
  flex: 1;
  padding-left: 20px;
  color: #666;
}

.comments {
  padding-left: 29px;
  border-top: 0;
}

.grip {
  width: 2px;
  height: 22px;
  margin: 0 2px 0 15px;
  border-left: 2px solid #888;
  border-right: 1px solid #888;
}

.tree {
  display: flex;
  flex-direction: column;
  gap: 8px;
  margin: 11px 0 0;
  padding: 0;
  list-style: none;
}

.node {
  display: flex;
  align-items: center;
  height: 40px;
}

.twisty {
  width: 16px;
  margin: 0 20px 0 8px;
}

.chip {
  display: flex;
  align-items: center;
  gap: 18px;
  height: 40px;
  padding: 0 21px 0 6px;
  background: #f2f2f2;
  white-space: nowrap;
}

.chip.long {
  flex: 1;
  padding-right: 0;
}

.chip-body {
  display: flex;
  align-items: center;
  gap: 18px;
}

.name {
  padding-left: 10px;
}

.dim {
  opacity: 0.4;
}

.root {
  gap: 12px;
  padding-right: 14px;
  font-size: 23px;
  font-weight: 700;
  color: #fff;
}

.root .chip-body {
  height: 32px;
  padding: 0 26px 0 6px;
  background: #999;
}

.activate {
  display: flex;
}

.activate input {
  appearance: none;
  width: 26px;
  height: 26px;
  margin: 0;
  border: 1px solid #444;
  border-radius: 50%;
  background: radial-gradient(circle, #333 0 5px, #dfe4f0 6px, #c3cbe0 9px, #fff 12px);
}

.bottom {
  position: relative;
  display: flex;
  align-items: flex-end;
  padding-bottom: 9px;
}

/* floats over the canvas, centred on the window */
.navbar {
  position: absolute;
  left: 50%;
  transform: translateX(-50%);
  display: flex;
  align-items: center;
  gap: 18px;
  height: 48px;
  margin-bottom: 3px;
  padding: 0 4px 0 8px;
  background: #f1f1f1;
}

.nav {
  gap: 4px;
}

/* Timeline */
.timeline {
  height: 94px;
  border-top: 6px solid #cbcbcb;
  background: #f1f1f1;
}

.scroll {
  display: flex;
  justify-content: flex-end;
  height: 14px;
  padding-right: 12px;
}

.scroll i {
  width: 1306px;
  border-radius: 7px;
  background: #cbcbcb;
}

.track {
  display: flex;
  align-items: flex-start;
}

.player {
  display: flex;
  gap: 25px;
  padding: 24px 28px 0 22px;
  fill: #4d4d4d;
}

.features {
  display: flex;
  gap: 16px;
  margin: 0;
  padding: 16px 0 0 18px;
  list-style: none;
  background: linear-gradient(90deg, #cbcbcb 0 6px, transparent 6px 10px, #cbcbcb 10px 18px, transparent 18px 22px, #cbcbcb 22px) left bottom / calc(100% - 14px) 4px no-repeat;
}

.features li {
  width: 32px;
  height: 52px;
  background: linear-gradient(#cbcbcb, #cbcbcb) 50% 100% / 4px 14px no-repeat;
}

.emboss {
  overflow: visible;
  font-family: "Noto Sans", sans-serif;
  font-size: 22px;
  font-weight: 600;
  fill: #67b0e7;
}

.marker {
  flex: none;
  margin: 4px 0 0 -4px;
}

.settings {
  margin: 24px 0 0 32px;
}
</style>
